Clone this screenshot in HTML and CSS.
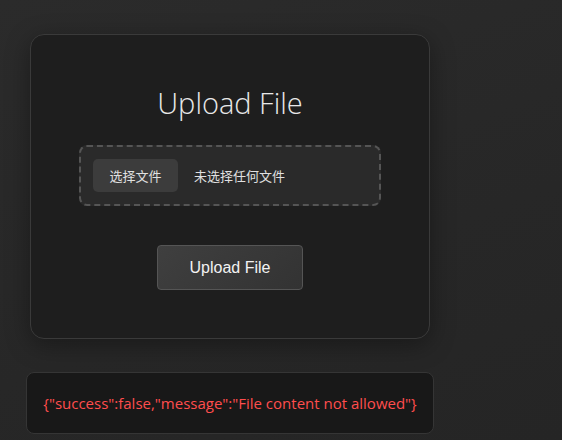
FILE: index.html
```html
<!DOCTYPE html>
<html lang="zh">
<head>
<meta charset="utf-8">
<title>Upload File</title>
<link rel="stylesheet" href="styles.css">
</head>
<body>
<main class="page">
  <section class="card">
    <h1 class="title">Upload File</h1>
    <form class="form">
      <div class="drop">
        <span class="pick">选择文件</span>
        <span class="none">未选择任何文件</span>
      </div>
      <button type="button" class="submit">Upload File</button>
    </form>
  </section>
  <div class="result">{"success":false,"message":"File content not allowed"}</div>
</main>
</body>
</html>
```
FILE: styles.css
```css
html, body {
  margin: 0;
  height: 100%;
}
body {
  background: linear-gradient(160deg, #2b2b2b 0%, #272727 60%, #252525 100%);
  font-family: "Open Sans", "Noto Sans CJK SC", sans-serif;
  color: #e6e6e6;
}
.page {
  display: flex;
  flex-direction: column;
  align-items: flex-start;
  padding: 34px 0 0 26px;
}
.card {
  box-sizing: border-box;
  width: 400px;
  height: 305px;
  margin-left: 4px;
  background: #1e1e1e;
  border: 1px solid #3a3a3a;
  border-radius: 14px;
  box-shadow: 0 6px 24px rgba(0, 0, 0, 0.35);
  display: flex;
  flex-direction: column;
  align-items: center;
  padding-top: 48px;
}
.title {
  margin: 0;
  font-weight: 300;
  font-size: 29px;
  line-height: 40px;
  color: #e8e8e8;
}
.form {
  display: flex;
  flex-direction: column;
  align-items: center;
  margin-top: 22px;
}
.drop {
  box-sizing: border-box;
  width: 302px;
  height: 61px;
  border: 2px dashed #555;
  border-radius: 8px;
  background: #2a2a2a;
  display: flex;
  align-items: center;
  padding-left: 12px;
  font-family: "Noto Sans CJK SC", sans-serif;
  font-size: 13px;
  color: #e0e0e0;
}
.pick {
  width: 85px;
  height: 33px;
  box-sizing: border-box;
  background: #3c3c3c;
  border-radius: 5px;
  display: flex;
  align-items: center;
  justify-content: center;
  margin-right: 16px;
}
.submit {
  margin-top: 39px;
  box-sizing: border-box;
  width: 146px;
  height: 45px;
  background: linear-gradient(135deg, #3f3f3f, #333333);
  border: 1px solid #555;
  border-radius: 4px;
  color: #f2f2f2;
  font-family: "Liberation Sans", Arial, sans-serif;
  font-size: 16px;
  padding: 0;
}
.result {
  box-sizing: border-box;
  width: 408px;
  height: 62px;
  margin-top: 33px;
  background: #181818;
  border: 1px solid #353535;
  border-radius: 8px;
  display: flex;
  align-items: center;
  justify-content: center;
  color: #ff4d4d;
  font-size: 15px;
}
```
